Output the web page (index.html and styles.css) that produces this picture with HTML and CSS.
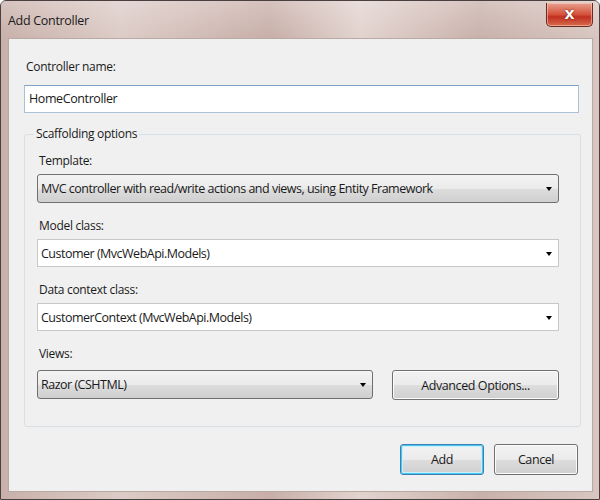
FILE: index.html
```html
<!DOCTYPE html>
<html>
<head>
<meta charset="utf-8">
<link rel="stylesheet" href="styles.css">
</head>
<body>
<div class="window">
  <div class="titlebar">
    <span class="title">Add Controller</span>
    <div class="close"><span>X</span></div>
  </div>
  <div class="client">
    <div class="field top-field">
      <label class="lbl">Controller name:</label>
      <div class="textbox">HomeController</div>
    </div>
    <fieldset class="group">
      <legend>Scaffolding options</legend>
      <div class="field">
        <label class="lbl">Template:</label>
        <div class="combo grad">MVC controller with read/write actions and views, using Entity Framework<span class="arrow"></span></div>
      </div>
      <div class="field">
        <label class="lbl">Model class:</label>
        <div class="combo plain">Customer (MvcWebApi.Models)<span class="arrow"></span></div>
      </div>
      <div class="field">
        <label class="lbl">Data context class:</label>
        <div class="combo plain">CustomerContext (MvcWebApi.Models)<span class="arrow"></span></div>
      </div>
      <div class="field">
        <label class="lbl">Views:</label>
        <div class="views-row">
          <div class="combo grad views">Razor (CSHTML)<span class="arrow"></span></div>
          <div class="btn adv">Advanced Options...</div>
        </div>
      </div>
    </fieldset>
    <div class="actions">
      <div class="btn default">Add</div>
      <div class="btn">Cancel</div>
    </div>
  </div>
</div>
</body>
</html>
```

FILE: styles.css
```css
html, body {
  margin: 0;
  padding: 0;
  background: #ffffff;
}
body {
  font-family: "Open Sans", "Noto Sans", sans-serif;
  font-size: 12px;
  letter-spacing: -0.3px;
  color: #1a1a1a;
}
.window {
  width: 600px;
  height: 500px;
  box-sizing: border-box;
  display: flex;
  flex-direction: column;
  border: 1px solid #4a4040;
  border-radius: 6px 6px 0 0;
  background: linear-gradient(90deg, #c9b0aa 0%, #dccbc6 20%, #c8aea8 45%, #e2d3ce 60%, #c9b1ab 80%, #d8c6c0 100%);
}
.titlebar {
  height: 37px;
  display: flex;
  align-items: flex-start;
  justify-content: space-between;
  padding: 0 6px 0 7px;
  background: linear-gradient(180deg, rgba(255,255,255,0.25), rgba(255,255,255,0));
}
.title {
  margin-top: 11px;
  font-size: 12.5px;
  color: #1a1a1a;
}
.close {
  width: 45px;
  height: 23px;
  margin-top: 2px;
  border: 1px solid #6b2a20;
  border-top: none;
  border-radius: 0 0 5px 5px;
  background: linear-gradient(180deg, #e8a090 0%, #d4513a 50%, #c03020 60%, #d86a4c 100%);
  display: flex;
  align-items: center;
  justify-content: center;
  box-shadow: inset 0 0 0 1px rgba(255,220,210,0.5);
}
.close span {
  color: #ffffff;
  font-family: "DejaVu Sans", sans-serif;
  font-weight: bold;
  font-size: 13px;
  letter-spacing: 0;
  text-shadow: 0 0 2px #5a1a10;
}
.client {
  flex: 1;
  margin: 0 6px 7px 7px;
  background: #f0f0f0;
  border: 1px solid #b8a9a5;
  padding: 20px 13px 0 15px;
  display: flex;
  flex-direction: column;
}
.field {
  display: flex;
  flex-direction: column;
  gap: 5px;
}
.top-field {
  gap: 10px;
}
.lbl {
  line-height: 16px;
  padding-left: 2px;
}
.textbox {
  height: 28px;
  box-sizing: border-box;
  background: #ffffff;
  border: 1px solid #a9c0d8;
  border-top-color: #7fa2c6;
  padding: 0 4px;
  line-height: 26px;
  font-size: 12.5px;
  letter-spacing: -0.4px;
}
.group {
  margin: 13px -2px 0 0;
  padding: 11px 21px 26px 12px;
  border: 1px solid #d5dfe5;
  border-radius: 3px;
  display: flex;
  flex-direction: column;
  gap: 15px;
}
.group legend {
  padding: 0 2px;
  margin-left: -3px;
  line-height: 16px;
}
.combo {
  position: relative;
  height: 29px;
  box-sizing: border-box;
  padding: 0 20px 0 3px;
  line-height: 27px;
  font-size: 12.5px;
  letter-spacing: -0.5px;
  white-space: nowrap;
}
.combo.grad {
  border: 1px solid #707070;
  border-radius: 3px;
  background: linear-gradient(180deg, #f3f3f3 0%, #ebebeb 50%, #dddddd 51%, #cfcfcf 100%);
}
.combo.plain {
  height: 28px;
  border: 1px solid #c8c8c8;
  background: #ffffff;
}
.arrow {
  position: absolute;
  right: 6px;
  top: 12px;
  width: 0;
  height: 0;
  border-left: 3.5px solid transparent;
  border-right: 3.5px solid transparent;
  border-top: 4px solid #000000;
}
.views-row {
  display: flex;
  gap: 19px;
  margin-top: 3px;
}
.views {
  width: 336px;
}
.btn {
  height: 30px;
  box-sizing: border-box;
  border: 1px solid #707070;
  border-radius: 3px;
  background: linear-gradient(180deg, #f2f2f2 0%, #ebebeb 50%, #dddddd 51%, #cfcfcf 100%);
  display: flex;
  align-items: center;
  justify-content: center;
  font-size: 12.5px;
  letter-spacing: -0.4px;
  box-shadow: inset 0 0 0 1px #fcfcfc;
}
.adv {
  flex: 1;
}
.actions {
  display: flex;
  justify-content: flex-end;
  gap: 10px;
  margin-top: 17px;
  padding-right: 1px;
}
.actions .btn {
  width: 84px;
  height: 31px;
}
.btn.default {
  border-color: #3c7fb1;
  box-shadow: inset 0 0 0 1px #48c8f0, inset 0 0 0 2px #c8f0fc;
}
```
